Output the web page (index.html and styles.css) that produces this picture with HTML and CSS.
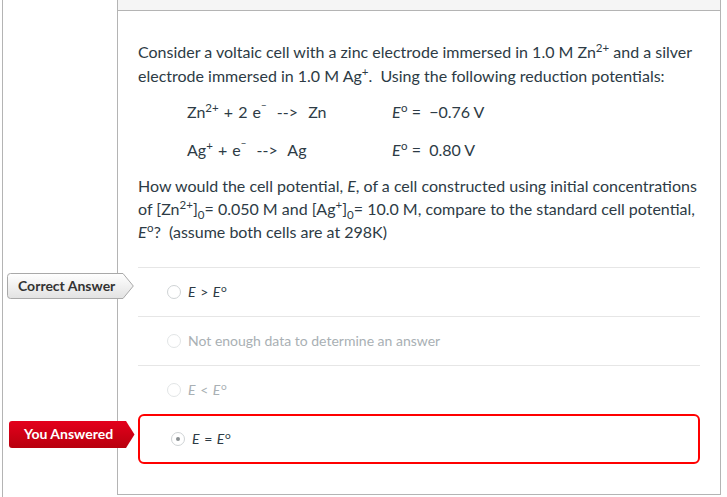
FILE: index.html
```html
<!DOCTYPE html>
<html lang="en">
<head>
<meta charset="utf-8">
<title>Quiz question</title>
<link rel="stylesheet" href="styles.css">
</head>
<body>
<div class="page">
  <div class="gutter"></div>
  <div class="question">
    <div class="q-header"></div>
    <div class="q-body">
      <p class="q-text">Consider a voltaic cell with a zinc electrode immersed in 1.0 M Zn<sup>2+</sup> and a silver electrode immersed in 1.0 M Ag<sup>+</sup>.&nbsp; Using the following reduction potentials:</p>
      <div class="eq eq-first"><span class="eq-l">Zn<sup>2+</sup> + 2 e<sup class="minus">−</sup>&nbsp; --&gt;&nbsp; Zn</span><span class="eq-r"><em>E</em><sup class="deg">o</sup> =&nbsp; −0.76 V</span></div>
      <div class="eq eq-second"><span class="eq-l">Ag<sup>+</sup> + e<sup class="minus">−</sup>&nbsp; --&gt;&nbsp; Ag</span><span class="eq-r"><em>E</em><sup class="deg">o</sup> = &nbsp;0.80 V</span></div>
      <p class="q-text q-second">How would the cell potential, <em>E</em>, of a cell constructed using initial concentrations of [Zn<sup>2+</sup>]<sub>0</sub>= 0.050 M and [Ag<sup>+</sup>]<sub>0</sub>= 10.0 M, compare to the standard cell potential, <em>E</em><sup class="deg">o</sup>?&nbsp; (assume both cells are at 298K)</p>

      <div class="answers">
        <div class="answer">
          <div class="tag tag-correct">
            <svg class="tag-bg" width="127" height="26" viewBox="0 0 127 26" aria-hidden="true">
              <defs>
                <linearGradient id="gGray" x1="0" y1="0" x2="0" y2="1">
                  <stop offset="0" stop-color="#ffffff"/>
                  <stop offset="1" stop-color="#e2e2e2"/>
                </linearGradient>
              </defs>
              <path d="M3.5 0.5 H116 L126.3 13 L116 25.5 H3.5 Q0.5 25.5 0.5 22.5 V3.5 Q0.5 0.5 3.5 0.5 Z" fill="url(#gGray)" stroke="#a9a9a9"/>
            </svg>
            <span class="tag-text">Correct Answer</span>
          </div>
          <span class="radio"></span>
          <span class="answer-text math"><em>E</em> &gt; <em>E</em><sup class="deg">o</sup></span>
        </div>
        <div class="answer muted">
          <span class="radio"></span>
          <span class="answer-text">Not enough data to determine an answer</span>
        </div>
        <div class="answer muted">
          <span class="radio"></span>
          <span class="answer-text math"><em>E</em> &lt; <em>E</em><sup class="deg">o</sup></span>
        </div>
        <div class="answer selected">
          <div class="tag tag-wrong">
            <svg class="tag-bg" width="126" height="27" viewBox="0 0 126 27" aria-hidden="true">
              <defs>
                <linearGradient id="gRed" x1="0" y1="0" x2="0" y2="1">
                  <stop offset="0" stop-color="#e4001c"/>
                  <stop offset="1" stop-color="#b8000e"/>
                </linearGradient>
              </defs>
              <path d="M3 0 H117 L125.5 13.5 L117 27 H3 Q0 27 0 24 V3 Q0 0 3 0 Z" fill="url(#gRed)"/>
            </svg>
            <span class="tag-text">You Answered</span>
          </div>
          <span class="radio checked"></span>
          <span class="answer-text math"><em>E</em> = <em>E</em><sup class="deg">o</sup></span>
        </div>
      </div>
    </div>
  </div>
</div>
</body>
</html>
```

FILE: styles.css
```css
html, body {
  margin: 0;
  padding: 0;
  background: #ffffff;
}

body {
  font-family: Lato, "Open Sans", "Liberation Sans", sans-serif;
  color: #2d3b45;
  padding-left: 2px;
}

.page {
  display: flex;
  align-items: flex-start;
  border-left: 1px solid #b4b4b4;
  min-height: 497px;
  box-sizing: border-box;
}

.gutter {
  width: 114px;
  flex: none;
}

.question {
  width: 604px;
  height: 495px;
  box-sizing: border-box;
  border: 1px solid #b4b4b4;
  border-top: none;
  flex: none;
}

.q-header {
  height: 10px;
  background: #f5f5f5;
  border-bottom: 1px solid #b4b4b4;
}

.q-body {
  padding: 29px 20px 0 20px;
}

.q-text {
  margin: 0;
  font-size: 16px;
  line-height: 24px;
}

.q-second {
  margin-top: 11.5px;
  line-height: 23px;
}

sup, sub {
  line-height: 0;
  font-size: 0.72em;
}

sup.deg {
  font-size: 0.72em;
  vertical-align: 0.5em;
  margin-left: 0.5px;
}

sup.minus {
  font-size: 0.6em;
  vertical-align: 0.9em;
}

.eq {
  display: grid;
  grid-template-columns: 205px auto;
  padding-left: 49px;
  font-size: 16px;
  line-height: 24px;
}

.eq-l {
  word-spacing: 1px;
}

.eq-first {
  margin-top: 12px;
}

.eq-second {
  margin-top: 14px;
}

.answers {
  margin-top: 24px;
}

.answer {
  position: relative;
  display: flex;
  align-items: center;
  height: 49px;
  box-sizing: border-box;
  border-top: 1px solid #e6e6e6;
  padding-left: 29px;
  font-size: 14px;
  color: #2d3b45;
}

.answer.muted {
  color: #a9b0b4;
}

.answer.selected {
  height: 50px;
  border: 2px solid #ff0000;
  border-radius: 6px;
  padding-left: 31px;
}

.radio {
  width: 12px;
  height: 12px;
  border: 1px solid #cfd3d5;
  border-radius: 50%;
  box-sizing: content-box;
  margin-right: 7px;
  flex: none;
  background: #ffffff;
  display: flex;
  align-items: center;
  justify-content: center;
}

.answer.muted .radio {
  border-color: #e2e5e6;
}

.radio.checked::after {
  content: "";
  width: 4px;
  height: 4px;
  border-radius: 50%;
  background: #8a8f92;
}

.answer-text {
  line-height: 17px;
}

.answer-text.math {
  word-spacing: 1px;
}

.tag {
  position: absolute;
  left: -131px;
  top: 5px;
  display: flex;
  align-items: center;
}

.tag-correct {
  width: 127px;
  height: 26px;
}

.tag-wrong {
  left: -131px;
  top: 5px;
  width: 126px;
  height: 27px;
}

.tag-bg {
  position: absolute;
  left: 0;
  top: 0;
}

.tag-text {
  position: relative;
  font-size: 14px;
  font-weight: 700;
  padding-left: 11px;
  line-height: 16px;
}

.tag-correct .tag-text {
  color: #333333;
}

.tag-wrong .tag-text {
  color: #ffffff;
  padding-left: 15px;
}
```
